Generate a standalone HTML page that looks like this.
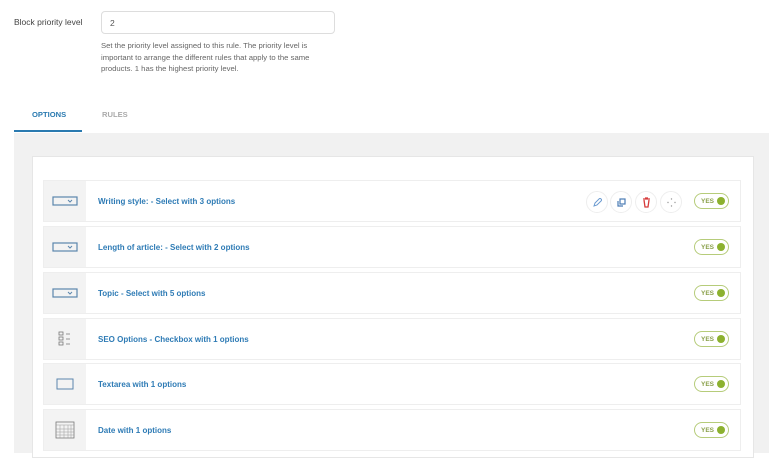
<!DOCTYPE html>
<html><head><style>
body{margin:0;width:769px;height:452px;background:#fff;font-family:"Liberation Sans",sans-serif;position:relative;overflow:hidden}
.abs{position:absolute}
.lbl{left:14px;top:17px;font-size:8.5px;color:#444}
.inp{left:101px;top:11px;width:234px;height:23px;border:1px solid #ddd;border-radius:4px;font-size:8.5px;color:#555;box-sizing:border-box;padding:6px 8px}
.help{left:101px;top:40px;font-size:7.7px;color:#666;line-height:11.6px;width:232px}
.tab{top:110px;font-size:7.6px;font-weight:bold}
.panel{left:14px;top:133px;width:755px;height:320px;background:#f1f1f1}
.card{left:32px;top:156px;width:720px;height:300px;background:#fff;border:1px solid #e6e6e6}
.row{left:43px;width:698px;height:42px;background:#fff;border:1px solid #eee;box-sizing:border-box}
.ic{position:absolute;left:0;top:0;width:42px;height:100%;background:#f3f3f3;display:flex;align-items:center;justify-content:center}
.t{position:absolute;left:54px;top:0;line-height:41px;font-size:8px;font-weight:bold;color:#2e7bb5}
.yes{position:absolute;left:650px;top:12px;width:35px;height:16px;border:1px solid #b6cc7a;border-radius:8px;box-sizing:border-box}
.yes span{position:absolute;left:6px;top:4px;line-height:7px;font-size:6.5px;color:#8aa04a;font-weight:bold}
.yes i{position:absolute;right:3px;top:3px;width:8px;height:8px;border-radius:50%;background:#8cb12f}
.cb{position:absolute;top:10px;width:22px;height:22px;border:1px solid #eee;border-radius:50%;box-sizing:border-box;display:flex;align-items:center;justify-content:center}
</style></head><body>
<div class="abs lbl">Block priority level</div>
<div class="abs inp">2</div>
<div class="abs help">Set the priority level assigned to this rule. The priority level is important to arrange the different rules that apply to the same products. 1 has the highest priority level.</div>
<div class="abs tab" style="left:32px;color:#2a7ab0">OPTIONS</div>
<div class="abs tab" style="left:102px;color:#aaa">RULES</div>
<div class="abs" style="left:14px;top:130px;width:68px;height:2px;background:#2a7ab0"></div>
<div class="abs panel"></div>
<div class="abs card"></div>

<div class="abs row" style="top:180px"><div class="ic"><svg width="26" height="10"><rect x="1" y="1" width="24" height="8" fill="none" stroke="#5b86ad" stroke-width="1.2"/><path d="M16 4l2 2 2-2" fill="none" stroke="#5b86ad"/></svg></div><div class="t">Writing style: - Select with 3 options</div>
<div class="cb" style="left:542px"><svg width="9" height="9"><path d="M1 8l1-3 5-5 2 2-5 5z" fill="none" stroke="#6a9ad0"/></svg></div>
<div class="cb" style="left:566px"><svg width="9" height="9"><rect x="3" y="1" width="5" height="5" fill="none" stroke="#4a7bb5" stroke-width="1.2"/><path d="M1 3v5h5" fill="none" stroke="#4a7bb5" stroke-width="1.2"/></svg></div>
<div class="cb" style="left:591px"><svg width="9" height="11"><path d="M1 2h7M3 1h3M2 3l1 7h3l1-7" fill="none" stroke="#d63a3a" stroke-width="1.3"/></svg></div>
<div class="cb" style="left:616px"><svg width="9" height="9"><g fill="#999"><circle cx="4.5" cy="1" r=".7"/><circle cx="4.5" cy="8" r=".7"/><circle cx="1" cy="4.5" r=".7"/><circle cx="8" cy="4.5" r=".7"/></g></svg></div>
<div class="yes"><span>YES</span><i></i></div></div>
<div class="abs row" style="top:226px"><div class="ic"><svg width="26" height="10"><rect x="1" y="1" width="24" height="8" fill="none" stroke="#5b86ad" stroke-width="1.2"/><path d="M16 4l2 2 2-2" fill="none" stroke="#5b86ad"/></svg></div><div class="t">Length of article: - Select with 2 options</div><div class="yes"><span>YES</span><i></i></div></div>
<div class="abs row" style="top:272px"><div class="ic"><svg width="26" height="10"><rect x="1" y="1" width="24" height="8" fill="none" stroke="#5b86ad" stroke-width="1.2"/><path d="M16 4l2 2 2-2" fill="none" stroke="#5b86ad"/></svg></div><div class="t">Topic - Select with 5 options</div><div class="yes"><span>YES</span><i></i></div></div>
<div class="abs row" style="top:318px"><div class="ic"><svg width="14" height="16"><g fill="none" stroke="#777" stroke-width=".8"><rect x="1" y="1" width="4" height="3"/><rect x="1" y="6" width="4" height="3"/><rect x="1" y="11" width="4" height="3"/><path d="M8 3h4M8 8h4M8 13h4"/></g></svg></div><div class="t">SEO Options - Checkbox with 1 options</div><div class="yes"><span>YES</span><i></i></div></div>
<div class="abs row" style="top:363px"><div class="ic"><svg width="18" height="12"><rect x="1" y="1" width="16" height="10" fill="none" stroke="#5b86ad" stroke-width="1"/></svg></div><div class="t">Textarea with 1 options</div><div class="yes"><span>YES</span><i></i></div></div>
<div class="abs row" style="top:409px"><div class="ic"><svg width="20" height="18"><rect x="1" y="1" width="18" height="16" fill="none" stroke="#777" stroke-width=".8"/><path d="M1 4h18M1 8h18M1 11h18M1 14h18M5 4v13M9 4v13M13 4v13M16 4v13" stroke="#999" stroke-width=".5"/></svg></div><div class="t">Date with 1 options</div><div class="yes"><span>YES</span><i></i></div></div>
</body></html>
